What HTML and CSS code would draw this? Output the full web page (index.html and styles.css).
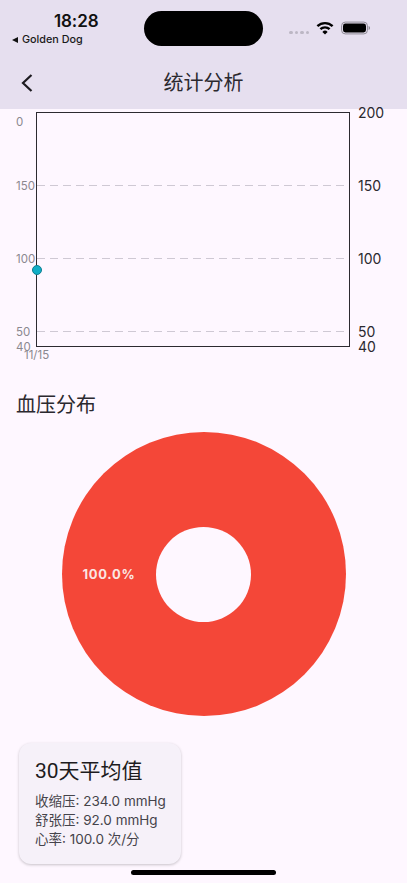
FILE: index.html
```html
<!DOCTYPE html>
<html lang="zh-CN">
<head>
<meta charset="utf-8">
<title>统计分析</title>
<link rel="stylesheet" href="styles.css">
</head>
<body>
<div class="page">
  <header class="top">
    <div class="status">
      <div class="status-left">
        <div class="time">18:28</div>
        <div class="back-app"><span class="tri"></span>Golden Dog</div>
      </div>
      <div class="island"></div>
      <div class="status-right">
        <div class="dots"><i></i><i></i><i></i><i></i></div>
        <svg class="wifi" width="18" height="14" viewBox="0 0 18 14"><path fill="none" stroke="#000" stroke-width="2.4" d="M1.4 5.2a11 11 0 0 1 15.2 0"/><path fill="none" stroke="#000" stroke-width="2.4" d="M4.4 8.2a6.6 6.6 0 0 1 9.2 0"/><path d="M9 13.6 6.4 10.9a3.7 3.7 0 0 1 5.2 0z"/></svg>
        <svg class="battery" width="30" height="14" viewBox="0 0 30 14"><rect x=".6" y="1.1" width="25.8" height="11.8" rx="3.6" fill="none" stroke="#8e8a94" stroke-width="1"/><rect x="2" y="2.5" width="23" height="9" rx="2.4"/><path d="M27.6 5v4c.9-.3 1.4-1.1 1.4-2s-.5-1.700-1.400-2z" fill="#8e8a94"/></svg>
      </div>
    </div>
    <div class="appbar">
      <svg class="chev" width="14" height="20" viewBox="0 0 14 20"><path d="M11.500 2 3 10l8.500 8" fill="none" stroke="#1d1b20" stroke-width="2.200"/></svg>
      <h1>统计分析</h1>
    </div>
  </header>
  <main>
    <section class="chart">
      <div class="plot">
        <div class="grid g150"></div>
        <div class="grid g100"></div>
        <div class="grid g50"></div>
        <div class="point"></div>
      </div>
      <span class="yl y0">0</span>
      <span class="yl y150">150</span>
      <span class="yl y100">100</span>
      <span class="yl y50">50</span>
      <span class="yl y40">40</span>
      <span class="xl">11/15</span>
      <span class="yr r200">200</span>
      <span class="yr r150">150</span>
      <span class="yr r100">100</span>
      <span class="yr r50">50</span>
      <span class="yr r40">40</span>
    </section>
    <h2>血压分布</h2>
    <div class="donut-wrap">
      <div class="donut"><div class="hole"></div><span class="pct">100.0%</span></div>
    </div>
    <section class="card">
      <h3>30天平均值</h3>
      <p>收缩压: 234.0 mmHg</p>
      <p>舒张压: 92.0 mmHg</p>
      <p>心率: 100.0 次/分</p>
    </section>
  </main>
  <div class="home"></div>
</div>
</body>
</html>
```
FILE: styles.css
```css
* { box-sizing: border-box; }
html, body { margin: 0; padding: 0; }
body { background: #fef7ff; font-family: Inter, "Noto Sans CJK SC", sans-serif; color: #1d1b20; }
.page { position: relative; width: 407px; height: 883px; overflow: hidden; background: #fef7ff; }

.top { background: #e6dfef; height: 109px; }
.status { position: relative; height: 56px; display: flex; justify-content: space-between; }
.status-left { padding: 11px 0 0 12px; width: 120px; }
.time { font: 600 17px/20px Inter, sans-serif; color: #111; margin-left: 42px; letter-spacing: -.1px; }
.back-app { font: 500 10.800px/14px Inter, sans-serif; color: #1a1a1a; margin-top: 2px; display: flex; align-items: center; gap: 4px; }
.tri { width: 0; height: 0; border-style: solid; border-width: 3.500px 6px 3.500px 0; border-color: transparent #111 transparent transparent; }
.island { position: absolute; left: 144px; top: 11px; width: 119px; height: 35px; border-radius: 17.500px; background: #000; }
.status-right { display: flex; align-items: center; padding: 0 36px 0 0; height: 56px; }
.dots { display: flex; gap: 2px; margin: 9px 7px 0 0; }
.dots i { width: 3.500px; height: 3.500px; border-radius: 50%; background: #bcb7c4; }
.wifi { margin-right: 7px; margin-bottom: 1px; }
.battery { margin-bottom: 1px; }

.appbar { position: relative; height: 53px; display: flex; align-items: center; justify-content: center; }
.appbar h1 { margin: 0; font: 400 20px/28px Roboto, "Noto Sans CJK SC", sans-serif; color: #2b292f; }
.chev { position: absolute; left: 20px; top: 17px; }

.chart { position: relative; height: 255px; }
.plot { position: absolute; left: 36px; top: 3px; width: 314px; height: 235px; border: 1px solid #2c2a30; }
.grid { position: absolute; left: 0; right: 0; height: 1px; background: repeating-linear-gradient(90deg, #cfc9d4 0 8px, transparent 8px 13px); }
.g150 { top: 72px; }
.g100 { top: 145px; }
.g50 { top: 218px; }
.point { position: absolute; left: -5.500px; top: 152px; width: 10px; height: 10px; border-radius: 50%; background: #11aec6; border: 1px solid #0f7f90; }
.yl { position: absolute; left: 16px; font-size: 11.500px; line-height: 14px; color: #8b888f; }
.y0 { top: 6px; }
.y150 { top: 70px; }
.y100 { top: 143px; }
.y50 { top: 216px; }
.y40 { top: 231px; }
.xl { position: absolute; left: 24px; top: 239px; font-size: 11.500px; line-height: 14px; color: #8b888f; }
.yr { position: absolute; left: 358px; font-size: 14px; line-height: 16px; color: #2b292f; }
.r200 { top: -4px; }
.r150 { top: 69px; }
.r100 { top: 142px; }
.r50 { top: 215px; }
.r40 { top: 230px; }

h2 { margin: 27px 0 0 16px; font: 400 20px/28px Roboto, "Noto Sans CJK SC", sans-serif; color: #2b292f; }
.donut-wrap { display: flex; justify-content: center; margin-top: 13px; }
.donut { position: relative; width: 284px; height: 284px; border-radius: 50%; background: #f44738; display: flex; align-items: center; justify-content: center; }
.hole { width: 95px; height: 95px; border-radius: 50%; background: #fef7ff; }
.pct { position: absolute; left: 21px; top: 134px; font-size: 13px; line-height: 16px; font-weight: 700; color: #fbe6e3; letter-spacing: .7px; }

.card { width: 162px; height: 121px; margin: 27px 0 0 19px; padding: 14px 0 0 16px; border-radius: 12px; background: #f6f1f9; box-shadow: 0 1px 3px rgba(0,0,0,.22); }
.card h3 { margin: 0 0 7px; font: 400 21px/28px Roboto, "Noto Sans CJK SC", sans-serif; color: #1d1b20; }
.card p { margin: 0; font-size: 13.500px; line-height: 19px; color: #45434a; white-space: nowrap; }

.home { position: absolute; left: 131px; bottom: 8px; width: 145px; height: 5px; border-radius: 3px; background: #000; }
```
